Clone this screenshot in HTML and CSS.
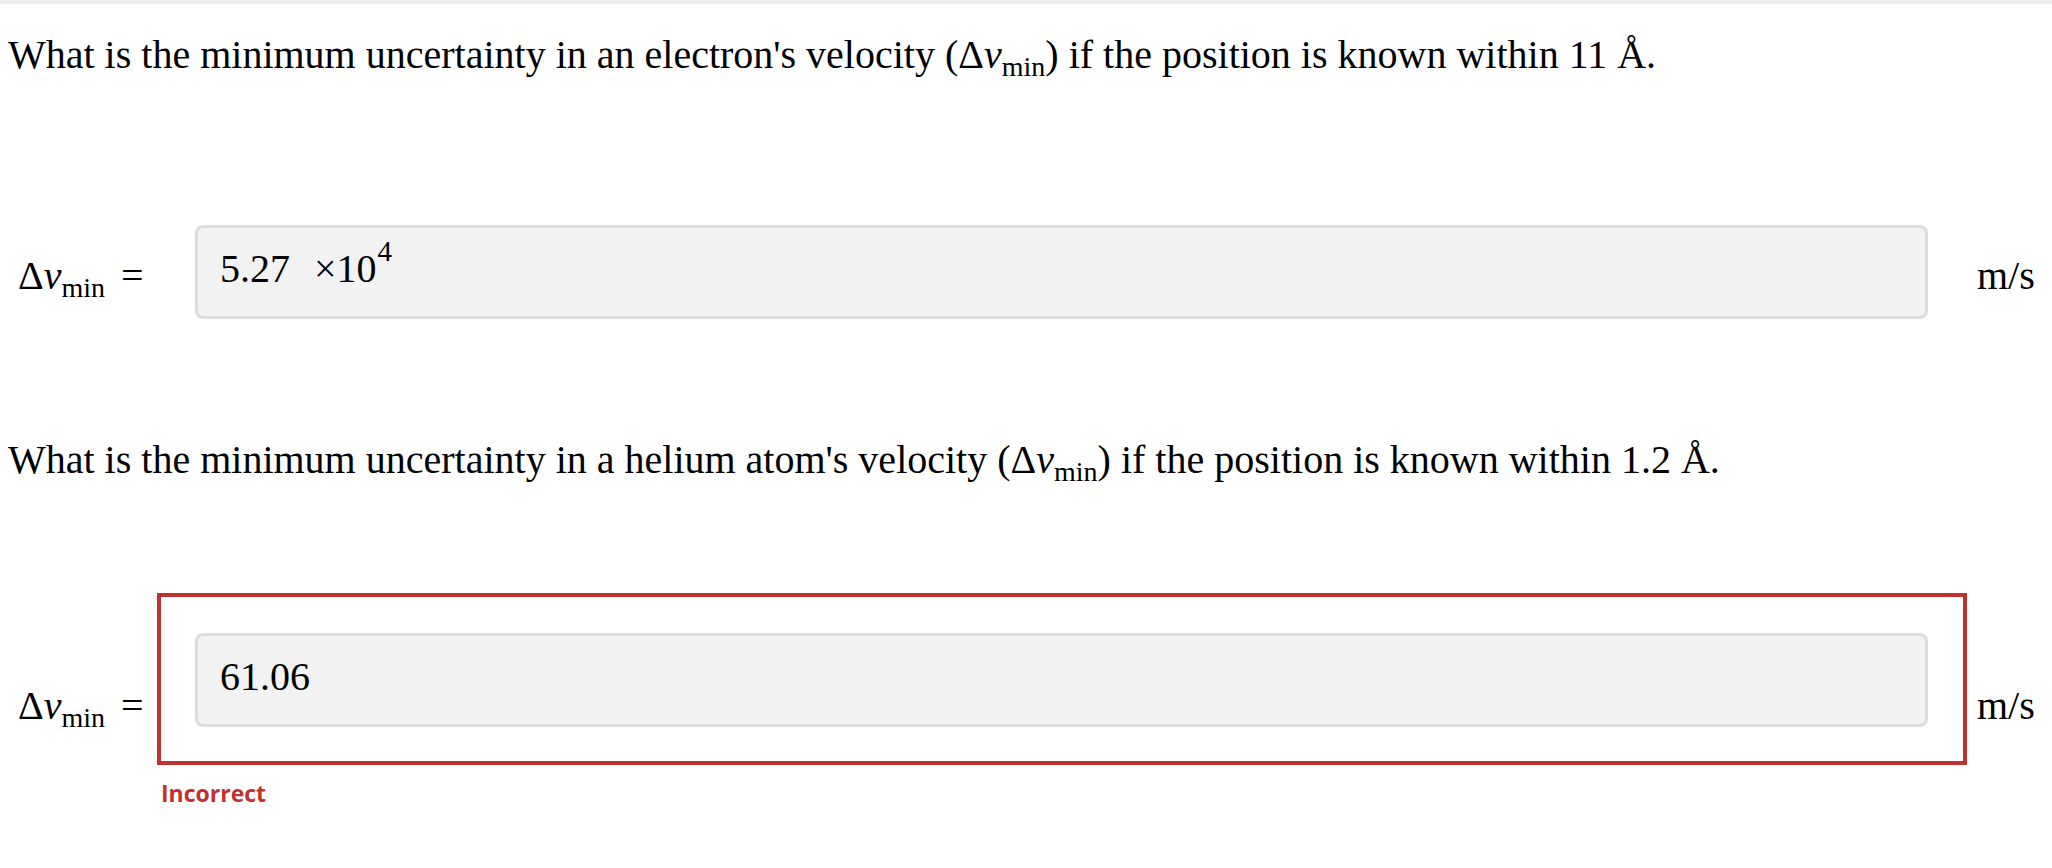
FILE: index.html
```html
<!DOCTYPE html>
<html lang="en">
<head>
    <meta charset="UTF-8">
    <title>Uncertainty Principle</title>
    <link rel="stylesheet" href="styles.css">
</head>
<body>
    <div class="topbar"></div>
    <div class="page">
        <div class="part part-first">
            <p class="prompt">What is the minimum uncertainty in an electron's velocity (<span class="math">Δ<i>v</i><sub>min</sub></span>) if the position is known within 11 Å.</p>
            <div class="answer-row">
                <div class="label"><span class="math">Δ<i>v</i><sub>min</sub></span><span class="eq">=</span></div>
                <div class="answer">
                    <div class="field-wrap">
                        <div class="field">5.27<span class="times">×10<sup>4</sup></span></div>
                    </div>
                </div>
                <div class="unit">m/s</div>
            </div>
        </div>

        <div class="part part-second">
            <p class="prompt">What is the minimum uncertainty in a helium atom's velocity (<span class="math">Δ<i>v</i><sub>min</sub></span>) if the position is known within 1.2 Å.</p>
            <div class="answer-row">
                <div class="label"><span class="math">Δ<i>v</i><sub>min</sub></span><span class="eq">=</span></div>
                <div class="answer">
                    <div class="field-wrap incorrect">
                        <div class="field">61.06</div>
                    </div>
                    <div class="feedback">Incorrect</div>
                </div>
                <div class="unit">m/s</div>
            </div>
        </div>
    </div>
</body>
</html>
```

FILE: styles.css
```css
body {
    margin: 0;
    background: #fff;
    color: #000;
    font-family: "Liberation Serif", "Times New Roman", serif;
    font-size: 40px;
    line-height: 46px;
}
.topbar {
    height: 4px;
    background: #eeeeee;
}
.page {
    padding: 0 8px;
}
.prompt {
    margin: 0;
}
.part-first {
    padding-top: 28px;
}
.part-first .answer-row {
    margin-top: 107px;
}
.part-second {
    padding-top: 80px;
}
.part-second .answer-row {
    margin-top: 110px;
}
.math i {
    font-style: italic;
}
sub {
    font-size: 28px;
    line-height: 0;
    vertical-align: -8px;
}
sup {
    font-size: 29px;
    line-height: 0;
    vertical-align: 21px;
    margin-left: 1px;
}
.answer-row {
    display: flex;
    align-items: center;
}
.label {
    flex: 0 0 149px;
    box-sizing: border-box;
    padding: 10px 0 0 10px;
    white-space: nowrap;
}
.eq {
    margin-left: 16px;
}
.answer {
    flex: 1;
}
.field-wrap {
    border: 4px solid transparent;
    padding: 36px 35px 34px 34px;
}
.field-wrap.incorrect {
    border-color: #c1312f;
}
.field {
    height: 94px;
    box-sizing: border-box;
    padding: 18px 22px;
    background: #f2f2f2;
    border: 3px solid #dcdcdc;
    border-radius: 8px;
    white-space: nowrap;
}
.times {
    margin-left: 24px;
}
.feedback {
    margin: 12px 0 0 4px;
    font-family: "Open Sans", sans-serif;
    font-weight: 700;
    font-size: 23px;
    line-height: 32px;
    color: #c1312f;
}
.unit {
    flex: 0 0 67px;
    margin-left: 10px;
    padding-top: 10px;
    white-space: nowrap;
}
```
